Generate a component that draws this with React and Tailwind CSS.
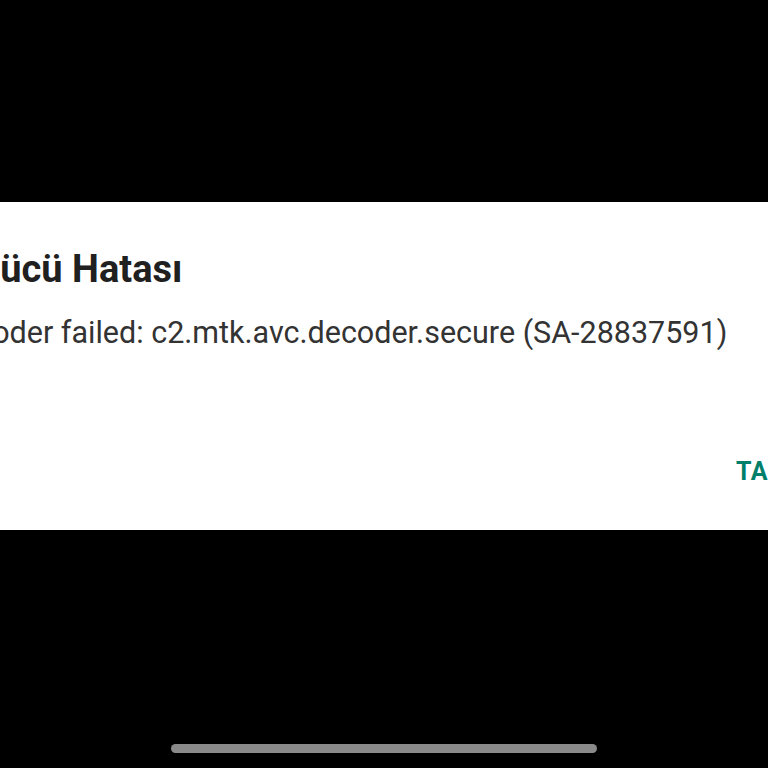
import React from 'react';

const font = { fontFamily: 'Roboto, "Noto Sans", sans-serif' };

const App = () => {
  return (
    <div className="w-[768px] h-[768px] bg-black flex flex-col overflow-hidden" style={font}>
      <div className="mt-[202px] h-[328px] bg-white overflow-hidden flex flex-col">
        <h1 className="mt-[45px] ml-[-141px] whitespace-nowrap text-[38px] leading-[44px] font-bold text-[#202020]">
          Kod Çözücü Hatası
        </h1>
        <p className="mt-[23px] ml-[-60px] whitespace-nowrap text-[30.5px] leading-[38px] text-[#333333]">
          Decoder failed: c2.mtk.avc.decoder.secure (SA-28837591)
        </p>
        <div className="mt-[104px] pl-[736px] whitespace-nowrap">
          <button className="text-[25px] leading-[32px] font-bold text-[#00806a] tracking-wide">TAMAM</button>
        </div>
      </div>
      <div className="mt-auto mb-[15px] mx-auto w-[426px] h-[9px] rounded-full bg-[#8a8a8a]" />
    </div>
  );
};

export default App;
